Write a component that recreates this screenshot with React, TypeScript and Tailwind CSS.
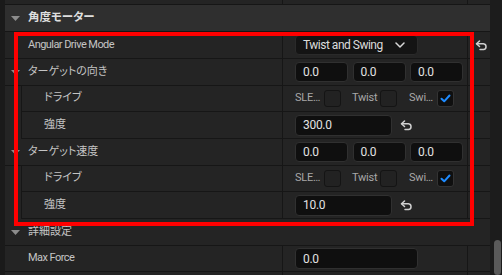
import React from "react";

const ROW = "bg-[#242424]";
const LINE = "border-[#161616]";

function Tri() {
  return (
    <svg width="9" height="5" viewBox="0 0 9 5" className="shrink-0">
      <path d="M0 0 H9 L4.5 5 Z" fill="#8c8c8c" />
    </svg>
  );
}

function ResetIcon() {
  return (
    <svg width="13" height="11" viewBox="0 0 13 11" className="shrink-0">
      <path d="M4.5 1 L1.5 3.75 L4.5 6.5" fill="none" stroke="#d0d0d0" strokeWidth="1.5" strokeLinejoin="round" strokeLinecap="round" />
      <path d="M1.8 3.75 H8.5 A2.9 2.9 0 0 1 8.5 9.5 H5" fill="none" stroke="#d0d0d0" strokeWidth="1.5" strokeLinecap="round" />
    </svg>
  );
}

function Chevron() {
  return (
    <svg width="10" height="6" viewBox="0 0 10 6" className="shrink-0">
      <path d="M1 1 L5 5 L9 1" fill="none" stroke="#d8d8d8" strokeWidth="1.5" strokeLinecap="round" strokeLinejoin="round" />
    </svg>
  );
}

function Check({ checked }: { checked?: boolean }) {
  return (
    <div
      className={
        "w-[17px] h-[17px] rounded-[3px] border flex items-center justify-center shrink-0 " +
        (checked ? "bg-[#0f0f0f] border-[#333333]" : "bg-[#222222] border-[#141414]")
      }
    >
      {checked && (
        <svg width="11" height="9" viewBox="0 0 11 9">
          <path d="M1.5 4.8 L4.2 7.3 L9.5 1.5" fill="none" stroke="#1e8bff" strokeWidth="2" strokeLinecap="round" strokeLinejoin="round" />
        </svg>
      )}
    </div>
  );
}

function Input({ w, v, h = "h-[20px]" }: { w: string; v: string; h?: string }) {
  return (
    <div className={`${w} ${h} rounded-[4px] bg-[#0f0f0f] border border-[#303030] flex items-center pl-[7px] text-[12px] tracking-[-0.3px] text-[#e2e2e2] shrink-0`}>
      {v}
    </div>
  );
}

function Cols({
  name,
  value,
  reset,
  child,
}: {
  name: React.ReactNode;
  value?: React.ReactNode;
  reset?: React.ReactNode;
  child?: boolean;
}) {
  return (
    <>
      <div className={(child ? "w-[261px] pl-[22px] border-l " + LINE : "w-[277px]") + " h-full flex items-center shrink-0"}>
        {name}
      </div>
      <div className={"w-[185px] h-full border-l " + LINE + " flex items-center pl-[12px] shrink-0"}>{value}</div>
      <div className={"w-[23px] h-full border-l " + LINE + " flex items-center pl-[7px] shrink-0"}>{reset}</div>
    </>
  );
}

function Row({
  h,
  name,
  value,
  reset,
  child,
}: {
  h: string;
  name: React.ReactNode;
  value?: React.ReactNode;
  reset?: React.ReactNode;
  child?: boolean;
}) {
  if (child) {
    return (
      <div className={`${h} flex ${ROW} shrink-0`}>
        <div className="w-[16px] h-full shrink-0" />
        <div className={`flex-1 h-full flex border-b ${LINE}`}>
          <Cols name={name} value={value} reset={reset} child />
        </div>
      </div>
    );
  }
  return (
    <div className={`${h} flex ${ROW} border-b ${LINE} shrink-0`}>
      <Cols name={name} value={value} reset={reset} />
    </div>
  );
}

function Label({ t }: { t: string }) {
  return <span className="pl-[23px] text-[11px] tracking-[-0.55px] text-[#c4c4c4] whitespace-nowrap">{t}</span>;
}

function GroupLabel({ t }: { t: string }) {
  return (
    <div className="flex items-center pl-[6px]">
      <Tri />
      <span className="ml-[8px] text-[11px] text-[#c4c4c4] whitespace-nowrap">{t}</span>
    </div>
  );
}

function ChildLabel({ t }: { t: string }) {
  return <span className="text-[11px] text-[#c4c4c4] whitespace-nowrap">{t}</span>;
}

function Vec() {
  return (
    <div className="flex gap-[4.5px]">
      <Input w="w-[53px]" v="0.0" />
      <Input w="w-[53px]" v="0.0" />
      <Input w="w-[53px]" v="0.0" />
    </div>
  );
}

function Drive() {
  return (
    <div className="flex items-center text-[11px] tracking-[-0.2px] text-[#a8a8a8]">
      <div className="flex items-center w-[57px]">
        <span className="w-[29px] whitespace-nowrap">SLE…</span>
        <Check />
      </div>
      <div className="flex items-center w-[57px]">
        <span className="w-[28px] whitespace-nowrap">Twist</span>
        <Check />
      </div>
      <div className="flex items-center w-[57px]">
        <span className="w-[28px] whitespace-nowrap">Swi…</span>
        <Check checked />
      </div>
    </div>
  );
}

function Strength({ v }: { v: string }) {
  return (
    <div className="flex items-center gap-[8px]">
      <Input w="w-[97px]" v={v} h="h-[21px]" />
      <ResetIcon />
    </div>
  );
}

export default function App() {
  return (
    <div
      className="relative w-[502px] h-[275px] overflow-hidden flex bg-[#1c1c1c] [font-feature-settings:'palt']"
      style={{ fontFamily: "Roboto, 'Noto Sans CJK JP', sans-serif" }}
    >
      <div className="w-[5px] h-full bg-[#1a1a1a] shrink-0" />
      <div className="w-[485px] h-full flex flex-col shrink-0">
        <Row h="h-[5px]" name={null} />
        <div className={`h-[27px] shrink-0 bg-[#2f2f2f] border-b ${LINE} flex items-center pl-[6px]`}>
          <Tri />
          <span className="ml-[8px] text-[11.5px] font-bold text-[#dedede]">角度モーター</span>
        </div>
        <Row
          h="h-[27px]"
          name={<Label t="Angular Drive Mode" />}
          value={
            <div className="w-[123px] h-[20px] rounded-[4px] bg-[#141414] border border-[#2a2a2a] flex items-center justify-between pl-[7px] pr-[12px] text-[12px] tracking-[-0.5px] text-[#dcdcdc]">
              <span>Twist and Swing</span>
              <Chevron />
            </div>
          }
          reset={<ResetIcon />}
        />
        <Row h="h-[27px]" name={<GroupLabel t="ターゲットの向き" />} value={<Vec />} />
        <Row h="h-[26px]" child name={<ChildLabel t="ドライブ" />} value={<Drive />} />
        <Row h="h-[27px]" child name={<ChildLabel t="強度" />} value={<Strength v="300.0" />} />
        <Row h="h-[27px]" name={<GroupLabel t="ターゲット速度" />} value={<Vec />} />
        <Row h="h-[26px]" child name={<ChildLabel t="ドライブ" />} value={<Drive />} />
        <Row h="h-[27px]" child name={<ChildLabel t="強度" />} value={<Strength v="10.0" />} />
        <div className={`h-[27px] shrink-0 ${ROW} border-b ${LINE} flex items-center pl-[6px]`}>
          <Tri />
          <span className="ml-[8px] text-[11px] text-[#c4c4c4]">詳細設定</span>
        </div>
        <Row h="h-[26px]" name={<Label t="Max Force" />} value={<Input w="w-[123px]" v="0.0" h="h-[21px]" />} />
        <Row h="h-[10px]" name={null} />
      </div>
      <div className="w-[12px] h-full bg-[#1c1c1c] flex flex-col shrink-0">
        <div className="mt-[240px] ml-[4px] w-[7px] h-[50px] rounded-full bg-[#5a5a5a]" />
      </div>
      <div className="absolute left-[14px] top-[32px] w-[460px] h-[194px] border-[4px] border-[#ff0000] pointer-events-none" />
    </div>
  );
}
